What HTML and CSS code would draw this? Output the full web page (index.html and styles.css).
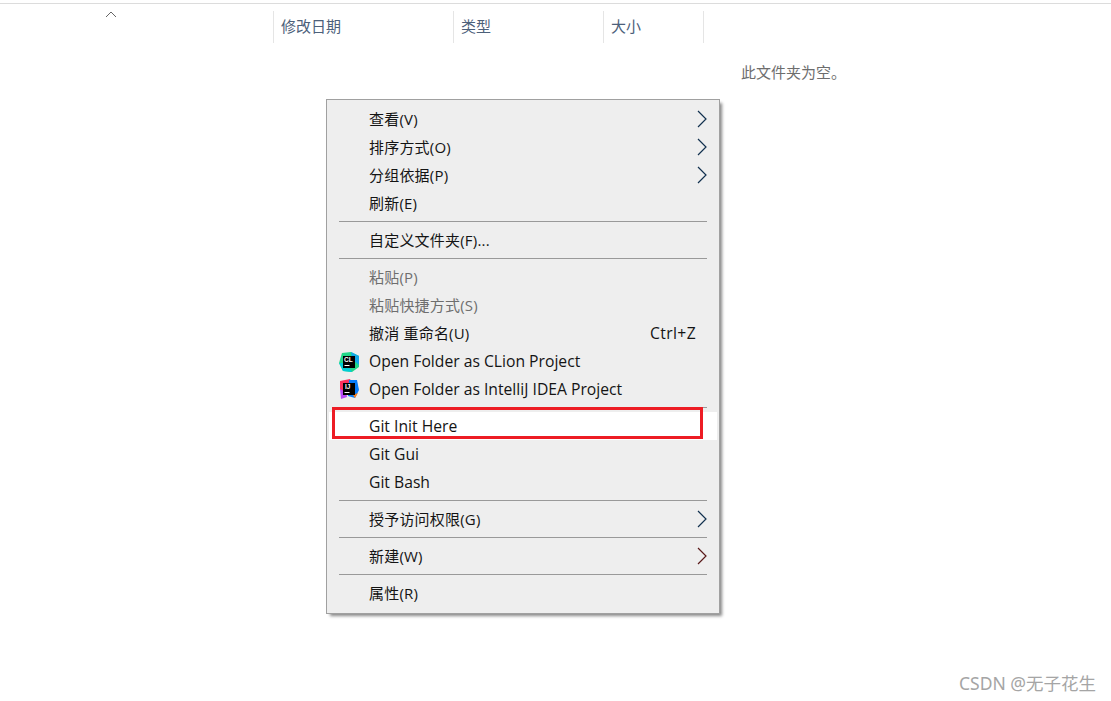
FILE: index.html
```html
<!DOCTYPE html>
<html lang="zh">
<head>
<meta charset="utf-8">
<title>文件夹</title>
<link rel="stylesheet" href="styles.css">
</head>
<body>
<header class="columns">
  <div class="col col-name"><svg class="sort" width="12" height="7" viewBox="0 0 12 7"><path d="M1 6 L6 1 L11 6" fill="none" stroke="#666" stroke-width="1"/></svg></div>
  <div class="col col-date">修改日期</div>
  <div class="col col-type">类型</div>
  <div class="col col-size">大小</div>
</header>
<p class="empty">此文件夹为空。</p>

<nav class="menu">
  <div class="row"><span class="label">查看(V)</span><svg class="arrow" viewBox="0 0 10 18"><path d="M1 1 L9 9 L1 17"/></svg></div>
  <div class="row"><span class="label">排序方式(O)</span><svg class="arrow" viewBox="0 0 10 18"><path d="M1 1 L9 9 L1 17"/></svg></div>
  <div class="row"><span class="label">分组依据(P)</span><svg class="arrow" viewBox="0 0 10 18"><path d="M1 1 L9 9 L1 17"/></svg></div>
  <div class="row"><span class="label">刷新(E)</span></div>
  <div class="sep"></div>
  <div class="row"><span class="label">自定义文件夹(F)...</span></div>
  <div class="sep"></div>
  <div class="row disabled"><span class="label">粘贴(P)</span></div>
  <div class="row disabled"><span class="label">粘贴快捷方式(S)</span></div>
  <div class="row"><span class="label">撤消 重命名(U)</span><span class="key">Ctrl+Z</span></div>
  <div class="row">
    <svg class="app" viewBox="0 0 20 20">
      <path d="M3 1 L12 0 L20 4 L20 15 L13 20 L4 19 L0 11 Z" fill="#21d789"/>
      <path d="M12 0 L20 4 L20 13 L13 7 Z" fill="#12a8e8"/>
      <path d="M0 11 L4 19 L13 20 L8 11 Z" fill="#00cdd7"/>
      <rect x="4" y="4" width="12" height="12" fill="#000"/>
      <text x="5" y="10.4" class="app-text">CL</text>
      <rect x="5.5" y="13" width="5" height="1" fill="#fff"/>
    </svg>
    <span class="label latin">Open Folder as CLion Project</span>
  </div>
  <div class="row">
    <svg class="app app-ij" viewBox="0 0 20 20">
      <path d="M1 2 L11 0 L14 6 L6 13 L1 11 Z" fill="#fe315d"/>
      <path d="M10 1 L18 1 L20 11 L16 19 L9 17 Z" fill="#087cfa"/>
      <path d="M1 10 L7 13 L8 18 L2 20 Z" fill="#b74af7"/>
      <path d="M14 16 L19 14 L16 19 Z" fill="#fc801d"/>
      <rect x="4" y="4" width="12" height="12" fill="#000"/>
      <text x="6" y="10.4" class="app-text">IJ</text>
      <rect x="5.5" y="13" width="5" height="1" fill="#fff"/>
    </svg>
    <span class="label latin">Open Folder as IntelliJ IDEA Project</span>
  </div>
  <div class="sep"></div>
  <div class="row hover"><span class="label latin">Git Init Here</span></div>
  <div class="row"><span class="label latin">Git Gui</span></div>
  <div class="row"><span class="label latin">Git Bash</span></div>
  <div class="sep"></div>
  <div class="row"><span class="label">授予访问权限(G)</span><svg class="arrow" viewBox="0 0 10 18"><path d="M1 1 L9 9 L1 17"/></svg></div>
  <div class="sep"></div>
  <div class="row"><span class="label">新建(W)</span><svg class="arrow dark-red" viewBox="0 0 10 18"><path d="M1 1 L9 9 L1 17"/></svg></div>
  <div class="sep"></div>
  <div class="row"><span class="label">属性(R)</span></div>
</nav>
<div class="callout"></div>
<div class="watermark">CSDN @无子花生</div>
</body>
</html>
```
FILE: styles.css
```css
* { box-sizing: border-box; }
html, body { height: 100%; }
body {
  margin: 0;
  background: #fff;
  font-family: "Open Sans", "Noto Sans CJK SC", sans-serif;
  overflow: hidden;
  position: relative;
}
.columns {
  display: flex;
  height: 42px;
  margin-top: 3px;
  padding-top: 7px;
  border-top: 1px solid #dcdcdc;
  color: #4c607a;
  font-family: "Noto Sans", "Noto Sans CJK SC", sans-serif;
  font-size: 15px;
  line-height: 31px;
}
.col { height: 32px; border-left: 1px solid #e5e5e5; padding-left: 7px; }
.col-name { width: 273px; border-left: 0; position: relative; }
.col-date { width: 180px; }
.col-type { width: 150px; }
.col-size { width: 101px; border-right: 1px solid #e5e5e5; }
.sort { position: absolute; left: 105px; top: 0; }
.empty {
  margin: 17px 0 0 741px;
  font-family: "Noto Sans CJK SC", sans-serif;
  font-size: 15px;
  line-height: 20px;
  color: #6d6d6d;
}
.menu {
  position: absolute;
  left: 326px;
  top: 99px;
  width: 394px;
  height: 515px;
  padding: 5px 2px;
  background: #eee;
  border: 1px solid #a0a0a0;
  box-shadow: 3px 3px 3px -1px #888;
  color: #141414;
}
.row {
  position: relative;
  display: flex;
  align-items: center;
  height: 28px;
  padding-left: 40px;
  padding-right: 10px;
  white-space: nowrap;
}
.label {
  flex: 1;
  font-size: 15px;
  letter-spacing: 0.2px;
  line-height: 26px;
}
.latin { font-size: 15.7px; letter-spacing: 0; margin-bottom: 1px; }
.key { font-size: 15.7px; letter-spacing: 0.35px; margin-right: 11px; margin-bottom: 1px; }
.disabled { color: #6e6e6e; }
.hover { background: #fff; }
.sep { height: 1px; margin: 4px 10px; background: #999; }
.arrow {
  width: 10px;
  height: 18px;
  fill: none;
  stroke: #12314f;
  stroke-width: 1.2;
  margin-bottom: 1px;
}
.dark-red { stroke: #5a1a1a; }
.app { position: absolute; left: 10px; top: 5px; width: 20px; height: 20px; }
.app-ij { top: 4px; }
.app-text { fill: #fff; font: 700 6.5px "Liberation Sans", sans-serif; }
.callout {
  position: absolute;
  left: 332px;
  top: 407px;
  width: 371px;
  height: 32px;
  border: 3px solid #ed1c24;
}
.watermark {
  position: absolute;
  right: 15px;
  top: 671px;
  font-family: "Noto Sans", "Noto Sans CJK SC", sans-serif;
  font-size: 17.5px;
  line-height: 24px;
  color: #a5a5a5;
}
```
